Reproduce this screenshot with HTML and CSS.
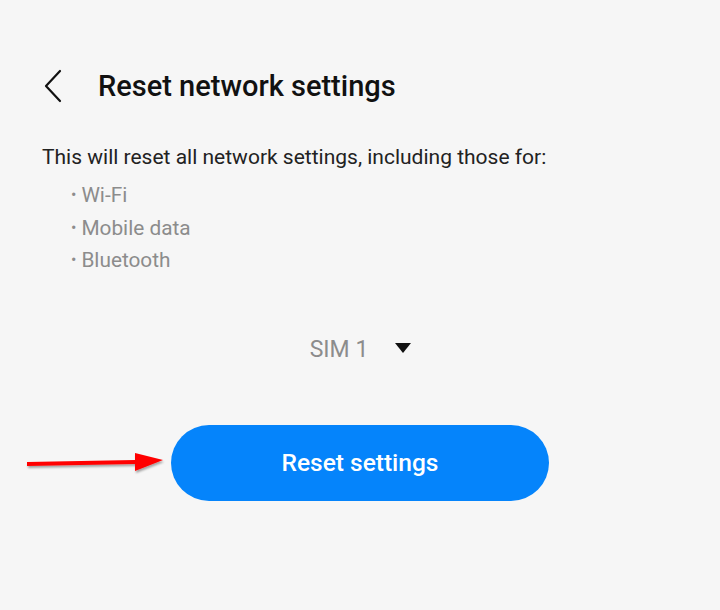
FILE: index.html
```html
<!DOCTYPE html>
<html>
<head>
<meta charset="utf-8">
<link rel="stylesheet" href="styles.css">
</head>
<body>
<div class="screen">
  <header class="topbar">
    <svg class="back" width="20" height="34" viewBox="0 0 20 34"><polyline points="16,2 2,17 16,32" fill="none" stroke="#111" stroke-width="2.2" stroke-linecap="round" stroke-linejoin="round"/></svg>
    <h1 class="title">Reset network settings</h1>
  </header>
  <p class="desc">This will reset all network settings, including those for:</p>
  <ul class="items">
    <li>Wi-Fi</li>
    <li>Mobile data</li>
    <li>Bluetooth</li>
  </ul>
  <div class="sim">
    <span class="sim-label">SIM 1</span>
    <svg class="caret" width="16" height="11" viewBox="0 0 16 11"><polygon points="0,0 16,0 8,10" fill="#111"/></svg>
  </div>
  <div class="action">
    <button class="reset-btn">Reset settings</button>
    <svg class="arrow" width="150" height="34" viewBox="0 0 150 34">
      <defs>
        <filter id="sh" x="-10%" y="-50%" width="120%" height="200%">
          <feDropShadow dx="1" dy="2" stdDeviation="1.2" flood-color="#000" flood-opacity="0.35"/>
        </filter>
      </defs>
      <polygon filter="url(#sh)" points="4,15 112,13 112,6 140,13 112,24 112,17 4,19" fill="#f00"/>
    </svg>
  </div>
</div>
</body>
</html>
```
FILE: styles.css
```css
html, body {
  margin: 0;
  padding: 0;
  background: #f6f6f6;
}
.screen {
  width: 720px;
  height: 610px;
  font-family: Roboto, "Noto Sans", sans-serif;
  background: #f6f6f6;
  box-sizing: border-box;
  padding-top: 68px;
}
.topbar {
  display: flex;
  align-items: center;
  height: 36px;
  padding-left: 44px;
}
.back {
  display: block;
}
.title {
  margin: 0 0 0 34px;
  font-size: 29px;
  font-weight: 500;
  color: #111;
  letter-spacing: 0;
}
.desc {
  margin: 38px 0 0 42px;
  font-size: 21px;
  color: #222;
  line-height: 30px;
}
.items {
  list-style: none;
  margin: 7px 0 0 71px;
  padding: 0;
  font-size: 20.8px;
  color: #8c8c8c;
  line-height: 32.5px;
}
.items li {
  height: 32.5px;
}
.items li::before {
  content: "•";
  font-size: 16px;
  line-height: 1;
  margin-right: 5px;
  vertical-align: 2px;
}
.sim {
  display: flex;
  justify-content: center;
  align-items: center;
  gap: 27px;
  margin-top: 58px;
  padding-left: 1px;
  height: 30px;
}
.sim-label {
  font-size: 23px;
  color: #8c8c8c;
}
.caret {
  display: block;
  margin-top: -3px;
}
.action {
  position: relative;
  display: flex;
  justify-content: center;
  margin-top: 60px;
}
.reset-btn {
  width: 378px;
  height: 76px;
  border: none;
  border-radius: 38px;
  background: #0584fb;
  color: #fff;
  font-family: Roboto, "Noto Sans", sans-serif;
  font-size: 24.5px;
  font-weight: 500;
  padding: 0;
}
.arrow {
  position: absolute;
  left: 23px;
  top: 22px;
}
```
